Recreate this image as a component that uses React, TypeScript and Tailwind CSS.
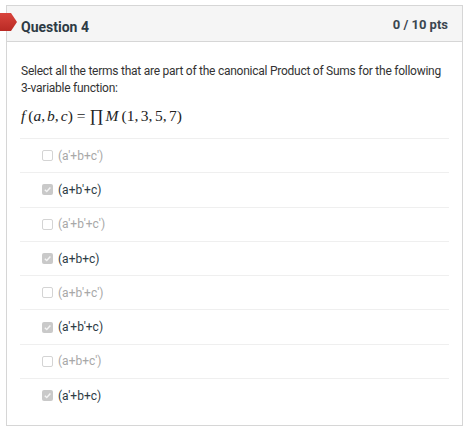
const options = [
  { label: "(a'+b+c')", checked: false },
  { label: "(a+b'+c)", checked: true },
  { label: "(a'+b'+c')", checked: false },
  { label: '(a+b+c)', checked: true },
  { label: "(a+b'+c')", checked: false },
  { label: "(a'+b'+c)", checked: true },
  { label: '(a+b+c\')', checked: false },
  { label: "(a'+b+c)", checked: true },
];

function Box({ checked }: { checked: boolean }) {
  if (!checked) {
    return <span className="w-[11px] h-[11px] border border-[#d4d4d4] rounded-[2px] bg-white shrink-0" />;
  }
  return (
    <span className="w-[11px] h-[11px] rounded-[2px] bg-[#c9c9c9] shrink-0 flex items-center justify-center">
      <svg width="9" height="9" viewBox="0 0 10 10" fill="none">
        <path d="M2 5.2 L4.2 7.3 L8.2 2.8" stroke="#f4f4f4" strokeWidth="1.6" />
      </svg>
    </span>
  );
}

export default function App() {
  return (
    <div className="w-[474px] h-[434px] bg-white pt-[5px] relative" style={{ fontFamily: 'Roboto, "Liberation Sans", sans-serif' }}>
      <div className="ml-[6px] w-[457px] h-[421px] border border-[#d6d6d6]">
        <div className="h-[36px] bg-[#f5f5f5] border-b border-[#d6d6d6] flex justify-between px-[14px]">
          <span className="text-[14px] font-bold text-[#2d3b45] mt-[11px]">Question 4</span>
          <span className="text-[13px] font-bold text-[#3a4650] mt-[9px]">0 / 10 pts</span>
        </div>
        <div className="px-[13px] pt-[21px]">
          <p className="text-[12px] tracking-[-0.25px] leading-[17px] text-[#333] pl-[1px]">
            Select all the terms that are part of the canonical Product of Sums for the following 3-variable function:
          </p>
          <div
            className="mt-[7px] h-[24px] flex items-center text-[15.5px] text-[#222] pl-[1px]"
            style={{ fontFamily: '"Liberation Serif", "DejaVu Serif", serif' }}
          >
            <i>f</i>
            <span className="ml-[3px]">(</span>
            <i>a</i>
            <span>,</span>
            <i className="ml-[2px]">b</i>
            <span>,</span>
            <i className="ml-[2px]">c</i>
            <span>)</span>
            <span className="mx-[4px]">=</span>
            <span className="text-[17px]">∏</span>
            <i className="ml-[2px]">M</i>
            <span className="ml-[3px]">(1,</span>
            <span className="ml-[2.5px]">3,</span>
            <span className="ml-[2.5px]">5,</span>
            <span className="ml-[2.5px]">7)</span>
          </div>
          <div className="mt-[10px]">
            {options.map((o, i) => (
              <div
                key={i}
                className="h-[34.3px] border-t border-[#efefef] flex items-center gap-[5px] pl-[22px]"
              >
                <Box checked={o.checked} />
                <span className={o.checked ? 'text-[12px] text-[#2d3b45]' : 'text-[12px] text-[#a8a8a8]'}>{o.label}</span>
              </div>
            ))}
          </div>
        </div>
      </div>
      <svg className="absolute left-0 top-[13px]" width="17" height="18" viewBox="0 0 17 18">
        <defs>
          <linearGradient id="fl" x1="0" y1="0" x2="0" y2="1">
            <stop offset="0" stopColor="#d9453d" />
            <stop offset="1" stopColor="#b92a24" />
          </linearGradient>
        </defs>
        <path d="M0 0 H11 L17 9 L11 18 H0 Z" fill="url(#fl)" />
      </svg>
    </div>
  );
}
